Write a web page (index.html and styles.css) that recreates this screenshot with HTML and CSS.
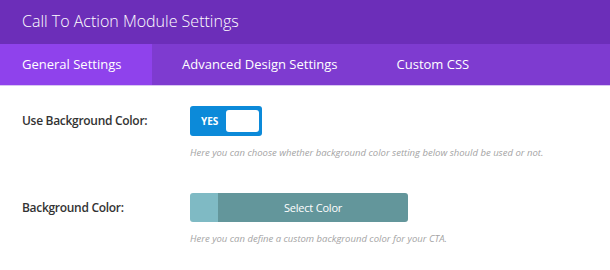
FILE: index.html
```html
<!DOCTYPE html>
<html lang="en">
<head>
    <meta charset="UTF-8">
    <title>Call To Action Module Settings</title>
    <link rel="stylesheet" href="styles.css">
</head>
<body>
    <div class="modal">
        <div class="modal-header">Call To Action Module Settings</div>
        <div class="tabs">
            <div class="tab active">General Settings</div>
            <div class="tab">Advanced Design Settings</div>
            <div class="tab">Custom CSS</div>
        </div>
        <div class="options">
            <div class="option">
                <label class="option-label">Use Background Color:</label>
                <div class="option-field">
                    <div class="toggle">
                        <span class="toggle-text">YES</span>
                        <span class="toggle-knob"></span>
                    </div>
                    <p class="description">Here you can choose whether background color setting below should be used or not.</p>
                </div>
            </div>
            <div class="option">
                <label class="option-label">Background Color:</label>
                <div class="option-field">
                    <div class="color-picker">
                        <span class="color-swatch"></span>
                        <span class="color-button">Select Color</span>
                    </div>
                    <p class="description">Here you can define a custom background color for your CTA.</p>
                </div>
            </div>
        </div>
    </div>
</body>
</html>
```

FILE: styles.css
```css
body {
    margin: 0;
    padding: 0;
    font-family: "Open Sans", Arial, sans-serif;
    background-color: #fff;
}
.modal-header {
    height: 44px;
    line-height: 42px;
    padding-left: 22px;
    background-color: #6c2eb9;
    color: #fff;
    font-size: 16px;
    font-weight: 300;
}
.tabs {
    display: flex;
    height: 41px;
    background-color: #7e3bd0;
    border-bottom: 1px solid #d8c5f2;
}
.tab {
    padding: 0 29px 0 30px;
    line-height: 41px;
    color: #fff;
    font-size: 13px;
}
.tab.active {
    width: 130px;
    padding: 0 0 0 22px;
    background-color: #8f42ec;
}
.options {
    padding: 20px 0 0 22px;
}
.option {
    display: flex;
    margin-bottom: 32px;
}
.option-label {
    width: 168px;
    padding-top: 6px;
    font-size: 12px;
    font-weight: 600;
    letter-spacing: -0.3px;
    color: #333;
    line-height: 18px;
}
.option-field {
    display: flex;
    flex-direction: column;
}
.toggle {
    display: flex;
    align-items: center;
    justify-content: space-between;
    width: 72px;
    height: 30px;
    padding: 0 3px 0 11px;
    box-sizing: border-box;
    background-color: #0c8ad9;
    border-radius: 3px;
}
.toggle-text {
    color: #fff;
    font-size: 10px;
    font-weight: 700;
}
.toggle-knob {
    width: 33px;
    height: 22px;
    background-color: #fff;
    border-radius: 3px;
}
.color-picker {
    display: flex;
    width: 218px;
    height: 29px;
    border-radius: 3px;
    overflow: hidden;
}
.color-swatch {
    width: 28px;
    background-color: #7fbac4;
}
.color-button {
    flex: 1;
    text-align: center;
    line-height: 29px;
    background-color: #63969b;
    color: #fff;
    font-size: 11px;
    letter-spacing: -0.2px;
}
.description {
    margin: 9px 0 0;
    font-size: 9.5px;
    font-style: italic;
    color: #a4a4a4;
    line-height: 16px;
}
```
